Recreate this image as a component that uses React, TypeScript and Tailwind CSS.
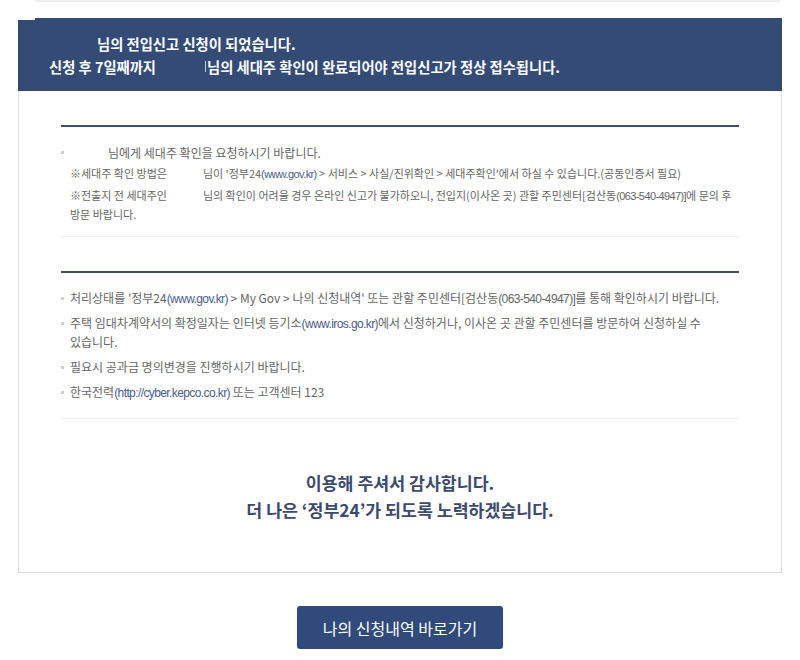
import React from "react";

const Lnk = ({ children }: { children: React.ReactNode }) => (
  <span className="font-['Liberation_Sans',sans-serif] tracking-[-0.6px] text-[#4b5c8c]">{children}</span>
);
const Num = ({ children }: { children: React.ReactNode }) => (
  <span className="font-['Liberation_Sans',sans-serif] tracking-[-0.6px]">{children}</span>
);
const Blank = ({ w }: { w: string }) => <span className={`inline-block ${w}`} />;

const Bullet = () => (
  <span className="absolute left-0 top-[8px] w-[3px] h-[3px] bg-[#cfcfcf]" />
);

export default function App() {
  return (
    <div className="w-[800px] h-[660px] bg-white font-['Noto_Sans_CJK_KR','Noto_Sans',sans-serif] text-[#666666]">
      <div className="ml-[35px] mr-[20px] h-[2px] bg-[#eeeeee]" />
      <div className="mx-[18px] mt-[16px] border-x border-b border-[#dcdcdc] relative">
        <div className="absolute -left-px top-0 w-[17px] h-[2px] bg-white" />
        <div className="-mx-px bg-[#344b76] h-[73px] pl-[31px] pt-[14px] text-white font-bold text-[14.3px] leading-[23px]">
          <div>
            <span className="inline-block w-[48px]" />님의 전입신고 신청이 되었습니다.
          </div>
          <div className="flex items-center">
            <span>신청 후 7일째까지</span>
            <span className="inline-block w-[49px]" />
            <span className="inline-block w-[1px] h-[11px] bg-white/70 mr-[1px]" />
            <span>님의 세대주 확인이 완료되어야 전입신고가 정상 접수됩니다.</span>
          </div>
        </div>

        <div className="px-[42px]">
          <div className="mt-[34px] h-[2px] bg-[#404e69]" />
          <div className="pt-[16px] pb-[13px]">
            <div className="relative pl-[9px] text-[12px] leading-[20px]">
              <Bullet />
              <Blank w="w-[38px]" />님에게 세대주 확인을 요청하시기 바랍니다.
            </div>
            <div className="pl-[9px] text-[11px] leading-[18px] mt-[1px]">
              <div>
                ※세대주 확인 방법은<Blank w="w-[36px]" />님이 '정부24<Lnk>(www.gov.kr)</Lnk> &gt; 서비스 &gt; 사실/진위확인 &gt; 세대주확인'에서 하실 수 있습니다.(공동인증서 필요)
              </div>
              <div className="mt-[3px]">
                ※전출지 전 세대주인<Blank w="w-[36px]" />님의 확인이 어려울 경우 온라인 신고가 불가하오니, 전입지(이사온 곳) 관할 주민센터[검산동<Num>(063-540-4947)]</Num>에 문의 후 방문 바랍니다.
              </div>
            </div>
          </div>
          <div className="h-px bg-[#efefef]" />

          <div className="mt-[34px] h-[2px] bg-[#404e69]" />
          <div className="pt-[16px] pb-[16px] text-[12px] leading-[18px]">
            <div className="relative pl-[9px]">
              <Bullet />
              처리상태를 '정부24<Lnk>(www.gov.kr)</Lnk> &gt; My Gov &gt; 나의 신청내역' 또는 관할 주민센터[검산동<Num>(063-540-4947)]</Num>를 통해 확인하시기 바랍니다.
            </div>
            <div className="relative pl-[9px] mt-[6px]">
              <Bullet />
              주택 임대차계약서의 확정일자는 인터넷 등기소<Lnk>(www.iros.go.kr)</Lnk>에서 신청하거나, 이사온 곳 관할 주민센터를 방문하여 신청하실 수
              <br />
              있습니다.
            </div>
            <div className="relative pl-[9px] mt-[7px]">
              <Bullet />
              필요시 공과금 명의변경을 진행하시기 바랍니다.
            </div>
            <div className="relative pl-[9px] mt-[7px]">
              <Bullet />
              한국전력<Lnk>(http://cyber.kepco.co.kr)</Lnk> 또는 고객센터 123
            </div>
          </div>
          <div className="h-px bg-[#efefef]" />

          <div className="pt-[50px] pb-[49px] text-center font-bold text-[17.3px] leading-[27px] text-[#3c4a6b]">
            <div>이용해 주셔서 감사합니다.</div>
            <div>더 나은 ‘정부24’가 되도록 노력하겠습니다.</div>
          </div>
        </div>
      </div>

      <div className="flex justify-center mt-[33px]">
        <button className="w-[206px] h-[43px] rounded-[3px] bg-[#304a7b] text-white text-[16px] font-['Noto_Sans_CJK_KR',sans-serif]">
          나의 신청내역 바로가기
        </button>
      </div>
    </div>
  );
}
